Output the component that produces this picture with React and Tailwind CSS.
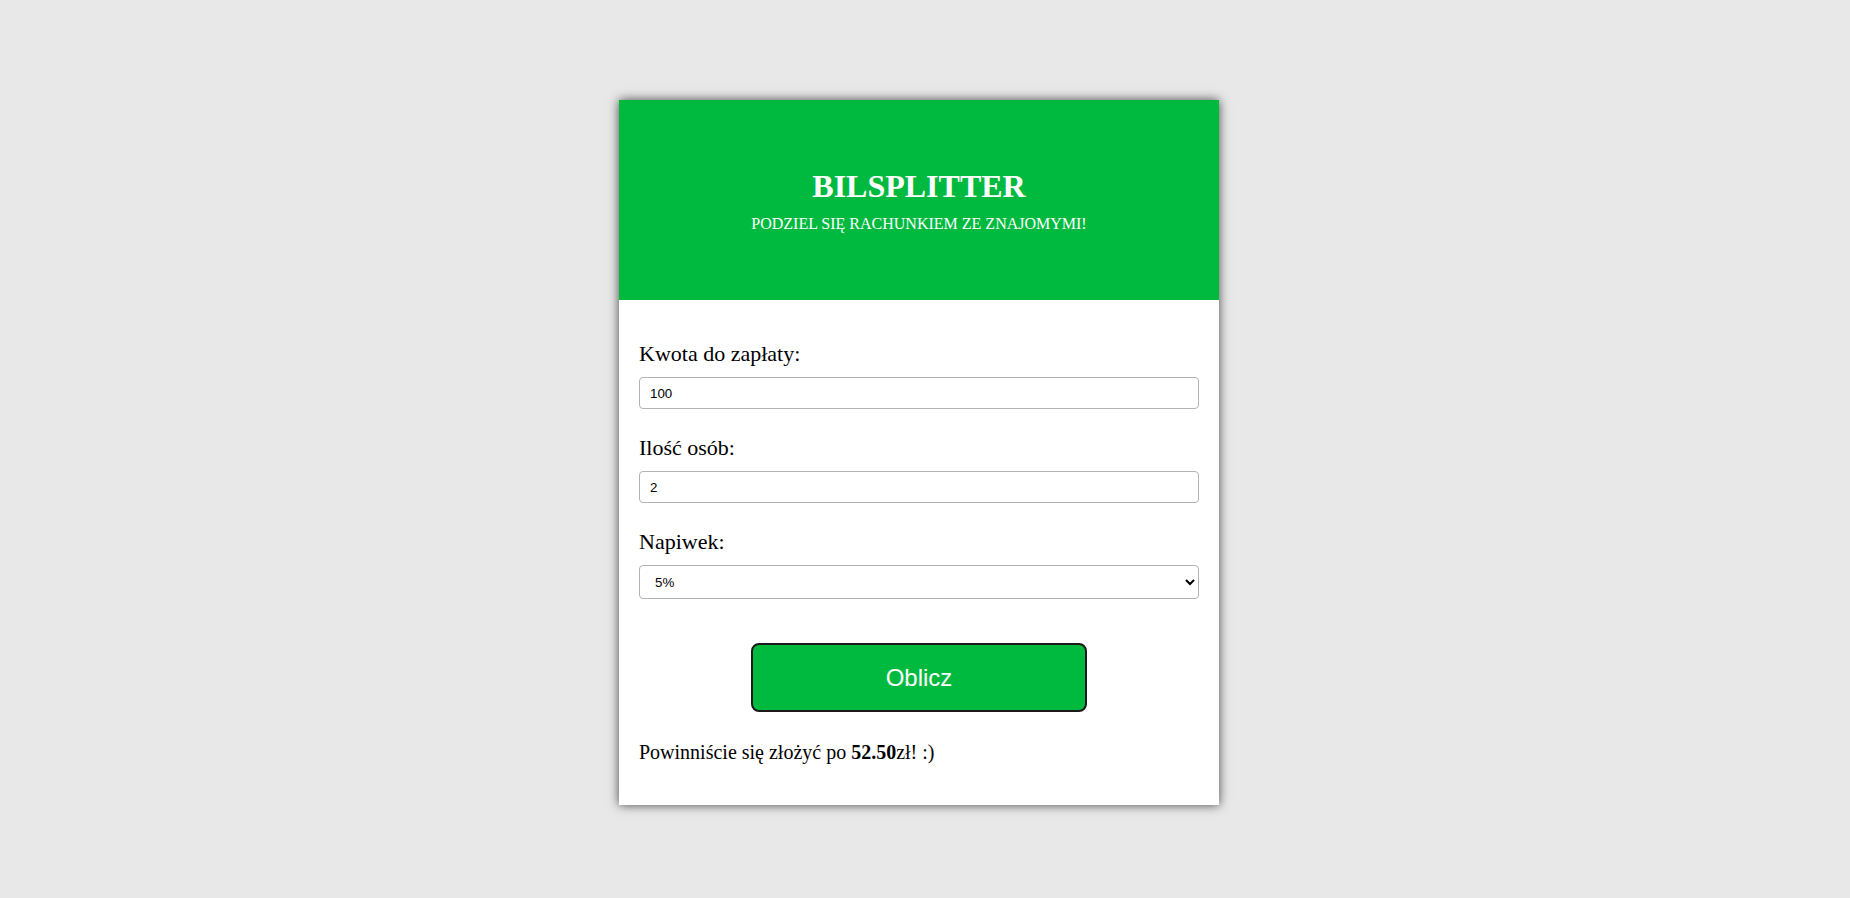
import React, { useState } from 'react';

export default function App() {
    const [amount, setAmount] = useState('100');
    const [people, setPeople] = useState('2');
    const [tip, setTip] = useState('0.05');
    const [share, setShare] = useState('52.50');

    const calculate = () => {
        const total = parseFloat(amount) * (1 + parseFloat(tip));
        const n = parseInt(people, 10);
        if (!n || isNaN(total)) return;
        setShare((total / n).toFixed(2));
    };

    return (
        <div className="min-h-[898px] bg-[#e8e8e8] flex justify-center pt-[100px] pr-[12px] font-['Liberation_Serif','Times_New_Roman',serif] text-black">
            <div className="w-[600px] h-fit bg-white shadow-[0_0_10px_rgba(0,0,0,0.7)]">
                {/* header */}
                <div className="h-[200px] bg-[#00ba3f] flex flex-col items-center justify-center text-white">
                    <h1 className="text-[32px] font-bold leading-[37px]">BILSPLITTER</h1>
                    <p className="mt-[10px] text-[16px] leading-[18px]">PODZIEL SIĘ RACHUNKIEM ZE ZNAJOMYMI!</p>
                </div>

                {/* form */}
                <div className="pt-[41px] pb-[41px] px-5">
                    <label className="block text-[22px] leading-[25px] mb-[11px]">Kwota do zapłaty:</label>
                    <input
                        type="number"
                        value={amount}
                        onChange={(e) => setAmount(e.target.value)}
                        className="block w-full h-8 mb-[26px] px-[10px] border border-[#b3b3b3] rounded bg-white font-['Liberation_Sans',Arial,sans-serif] text-[13.33px] outline-none"
                    />

                    <label className="block text-[22px] leading-[25px] mb-[11px]">Ilość osób:</label>
                    <input
                        type="number"
                        value={people}
                        onChange={(e) => setPeople(e.target.value)}
                        className="block w-full h-8 mb-[26px] px-[10px] border border-[#b3b3b3] rounded bg-white font-['Liberation_Sans',Arial,sans-serif] text-[13.33px] outline-none"
                    />

                    <label className="block text-[22px] leading-[25px] mb-[11px]">Napiwek:</label>
                    <select
                        value={tip}
                        onChange={(e) => setTip(e.target.value)}
                        className="block w-full h-[34px] px-[11px] border border-[#b3b3b3] rounded bg-white font-['Liberation_Sans',Arial,sans-serif] text-[13.33px] outline-none"
                    >
                        <option value="0">0%</option>
                        <option value="0.05">5%</option>
                        <option value="0.1">10%</option>
                        <option value="0.15">15%</option>
                        <option value="0.2">20%</option>
                    </select>

                    <div className="flex justify-center mt-[44px]">
                        <button
                            onClick={calculate}
                            className="w-[336px] h-[69px] bg-[#00ba3f] border-2 border-[#1a1a1a] rounded-lg text-white text-[24px] font-['Liberation_Sans',Arial,sans-serif]"
                        >
                            Oblicz
                        </button>
                    </div>

                    <p className="mt-[29px] text-[20px] leading-[23px]">
                        Powinniście się złożyć po <b>{share}</b>zł! :)
                    </p>
                </div>
            </div>
        </div>
    );
}
